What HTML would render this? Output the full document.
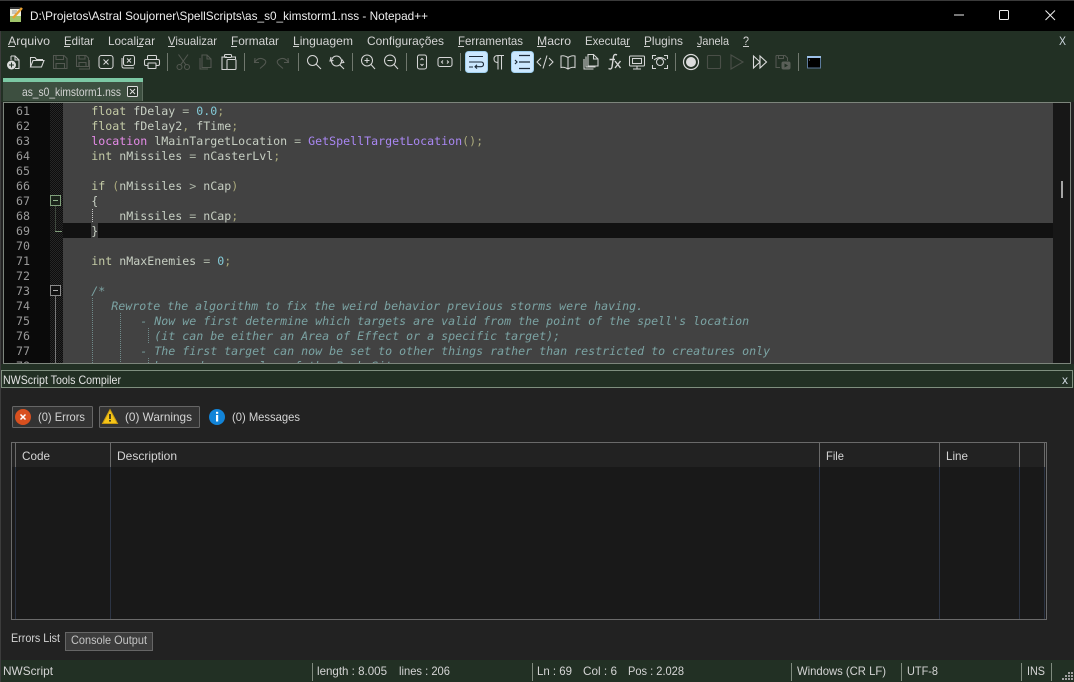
<!DOCTYPE html>
<html><head><meta charset="utf-8"><title>Notepad++</title>
<style>
html,body{margin:0;padding:0;background:#222;overflow:hidden}
svg{display:block}
text{font-family:"Liberation Sans",sans-serif;font-size:12px;fill:#d4d4d4;white-space:pre}
.c{font-family:"DejaVu Sans Mono",monospace;font-size:11.63px;fill:#c6cec2}
.k{fill:#c4cba6}.p{fill:#aaa97c}.o{fill:#aab2a4}.n{fill:#84cbd8}.t{fill:#e58be8}.f{fill:#a987f2}
.m{font-family:"DejaVu Sans Mono",monospace;font-size:11.63px;fill:#7ba3a3;font-style:italic}
.ln{font-family:"DejaVu Sans Mono",monospace;font-size:11.63px;fill:#9a9a9a;text-anchor:end}
.i{fill:none;stroke:#d6d6d6;stroke-width:1.05}
.d{fill:none;stroke:#535851;stroke-width:1.05}
.b{fill:none;stroke:#1c2a38;stroke-width:1.1}
</style></head><body>
<svg width="1074" height="682" viewBox="0 0 1074 682" xmlns="http://www.w3.org/2000/svg">
<defs>
<clipPath id="ed"><rect x="4" y="103" width="1049" height="260"/></clipPath>
<pattern id="chk" width="2" height="2" patternUnits="userSpaceOnUse"><rect width="2" height="2" fill="#0d0d0d"/><rect width="1" height="1" fill="#262626"/><rect x="1" y="1" width="1" height="1" fill="#262626"/></pattern>
</defs>
<rect width="1074" height="682" fill="#222"/>
<!-- title bar -->
<rect width="1074" height="31" fill="#000"/>
<rect width="1074" height="1" fill="#3a3a3a"/>
<g>
<rect x="10" y="9" width="11" height="13" fill="#f0f0e4"/>
<rect x="10" y="16" width="11" height="6" fill="#9fc46a"/>
<path d="M10 8h11" stroke="#666"/>
<path d="M13 18L22 8" stroke="#e8a030" stroke-width="2.4"/>
<path d="M12 11h5M12 13h4" stroke="#999"/>
</g>
<text x="30" y="20" textLength="398" lengthAdjust="spacingAndGlyphs" style="fill:#eee">D:\Projetos\Astral Soujorner\SpellScripts\as_s0_kimstorm1.nss - Notepad++</text>
<path d="M954 15h10" stroke="#eee"/>
<rect x="999.5" y="10.5" width="9" height="9" rx="1" fill="none" stroke="#eee"/>
<path d="M1045.5 10.5l9.5 9.500M1055 10.500l-9.500 9.500" stroke="#eee"/>
<!-- menu + toolbar band -->
<rect y="31" width="1074" height="71" fill="#223024"/>
<g>
<text x="8" y="45" textLength="42" lengthAdjust="spacingAndGlyphs">Arquivo</text>
<text x="64" y="45" textLength="30" lengthAdjust="spacingAndGlyphs">Editar</text>
<text x="108" y="45" textLength="47" lengthAdjust="spacingAndGlyphs">Localizar</text>
<text x="168" y="45" textLength="49" lengthAdjust="spacingAndGlyphs">Visualizar</text>
<text x="231" y="45" textLength="48" lengthAdjust="spacingAndGlyphs">Formatar</text>
<text x="293" y="45" textLength="60" lengthAdjust="spacingAndGlyphs">Linguagem</text>
<text x="367" y="45" textLength="77" lengthAdjust="spacingAndGlyphs">Configurações</text>
<text x="458" y="45" textLength="65" lengthAdjust="spacingAndGlyphs">Ferramentas</text>
<text x="537" y="45" textLength="34" lengthAdjust="spacingAndGlyphs">Macro</text>
<text x="585" y="45" textLength="45" lengthAdjust="spacingAndGlyphs">Executar</text>
<text x="644" y="45" textLength="39" lengthAdjust="spacingAndGlyphs">Plugins</text>
<text x="697" y="45" textLength="32" lengthAdjust="spacingAndGlyphs">Janela</text>
<text x="743" y="45" textLength="6" lengthAdjust="spacingAndGlyphs">?</text>
<path d="M8 46.500h7M64 46.500h6M137 46.500h6M168 46.500h7M231 46.500h6M293 46.500h6M458 46.500h6M537 46.500h9M625 46.500h5M644 46.500h6M697 46.500h4M743 46.500h6" stroke="#cfcfcf"/>
</g>
<text x="1059" y="45" textLength="7" lengthAdjust="spacingAndGlyphs" style="fill:#cfd8e0">X</text>

<!-- toolbar separators -->
<path d="M167.500 53v18M244.500 53v18M298.500 53v18M352.500 53v18M406.500 53v18M460.500 53v18M675.500 53v18M798.500 53v18" stroke="#70786e"/>
<!-- new -->
<g class="i" transform="translate(14,62)"><path d="M-3-6h4l4 4v8.500h-4M-3-6v4M1-6v4h4"/><circle cx="-2.500" cy="3" r="4.500" fill="#dcdcdc" stroke="none"/><path d="M-5 3h5M-2.500 .5v5" stroke="#223024"/></g>
<!-- open -->
<g class="i" transform="translate(37,62)"><path d="M-6.500 5V-4.500h4.500l1.500 2h6v1.500M-6.500 5h11l2.500-6.500h-11z"/></g>
<!-- save -->
<g class="d" transform="translate(60,62)"><path d="M-6.500-6.500h10.500l3 3v10h-13.500z"/><path d="M-4-6.500v4h7.500v-4M-4 6.500v-5h8.500v5"/></g>
<!-- save all -->
<g class="d" transform="translate(83,62)"><path d="M-6.500-6.500h9.500l2.500 2.500v8.500h-12z"/><path d="M-4-6.500v3.500h6v-3.500M-4 4.500v-4h7v4M-4 7h10.500v-9"/></g>
<!-- close -->
<g class="i" transform="translate(106,62)"><rect x="-7" y="-6.500" width="14" height="13" rx="2.500"/><path d="M-2.500-2.500l5 5M2.500-2.500l-5 5"/></g>
<!-- close all -->
<g class="i" transform="translate(129,62)"><rect x="-5.500" y="-6.500" width="11" height="10" rx="2"/><path d="M-2-3.500l4 4M2-3.500l-4 4M-7-4v8q0 2 2 2h10"/></g>
<!-- print -->
<g class="i" transform="translate(152,62)"><path d="M-4.500-2.500v-3q0-1 1-1h7q1 0 1 1v3"/><path d="M-4 3.500h-2q-1.500 0-1.500-1.500v-3q0-1.500 1.500-1.500h12q1.500 0 1.500 1.500v3q0 1.500-1.500 1.500h-2"/><rect x="-4" y="1" width="8" height="5.500" rx=".5"/></g>
<!-- cut -->
<g class="d" transform="translate(183,62)"><circle cx="-3.500" cy="5" r="2.500"/><circle cx="4" cy="5" r="2.500"/><path d="M-2.500 3L5-7.500M3 3L-4.500-7.500"/></g>
<!-- copy -->
<g class="d" transform="translate(206,62)"><path d="M-4-7h5l4 4v8.500h-9z"/><path d="M1-7v4h4M-6-4v11h8"/></g>
<!-- paste -->
<g class="i" transform="translate(229,62)"><path d="M-2-5h-5v12.500h5"/><rect x="-2" y="-2.500" width="9" height="10" rx="1"/><rect x="-4.500" y="-7.500" width="7" height="3" rx="1"/><path d="M2.500-5h4v2"/></g>
<!-- undo / redo -->
<g class="d" transform="translate(260,62)"><path d="M-5-4l-.5 4.500h4.500M-5.500 .5Q-2-5 3-3t1 6L0 6.500"/></g>
<g class="d" transform="translate(283,62)"><path d="M5-4l.5 4.500H1M5.500 .5Q2-5-3-3t-1 6L0 6.500"/></g>
<!-- find -->
<g class="i" transform="translate(314,62)"><circle cx="-1.500" cy="-1.500" r="5"/><path d="M2 2l5 5"/></g>
<!-- replace -->
<g class="i" transform="translate(337,62)"><circle cx="-.5" cy="-1" r="5"/><path d="M-6-5l-1 4 3.500-.5M5-2.500l1.800 3-3.500.5M3 3l4 4" /></g>
<!-- zoom in -->
<g class="i" transform="translate(368,62)"><circle cx="-1" cy="-1.500" r="5.500"/><path d="M-3.500-1.500h5M-1-4v5M3 2.500l4 4.500"/></g>
<!-- zoom out -->
<g class="i" transform="translate(391,62)"><circle cx="-1" cy="-1.500" r="5.500"/><path d="M-3.500-1.500h5M3 2.500l4 4.500"/></g>
<!-- sync v -->
<g class="i" transform="translate(422,62)"><rect x="-4.500" y="-7" width="9" height="14" rx="2"/><path d="M-1.500-2L0-3.500 1.500-2M-1.500 2L0 3.500 1.500 2"/></g>
<!-- sync h -->
<g class="i" transform="translate(445,62)"><rect x="-7" y="-4.500" width="14" height="9" rx="2"/><path d="M-2-1.500L-3.500 0-2 1.500M2-1.500L3.500 0 2 1.500"/></g>
<!-- wrap -->
<rect x="465.500" y="51.500" width="22" height="21" rx="3" fill="#cce8ff" stroke="#a0cfee"/>
<g class="b" transform="translate(476,62)"><path d="M-7-5.500h14M-7 0h12q2.500 0 2.500 2.300T5 4.700H-1M1 2.800l-2 1.900 2 1.900M-7 5h4"/></g>
<!-- pilcrow -->
<g class="i" transform="translate(499,62)"><path d="M-1-6.500v14M2.500-6.500v14M5-6.500H-1q-4 0-4 3.500t4 3.500"/></g>
<!-- indent -->
<rect x="511.500" y="51.500" width="22" height="21" rx="3" fill="#cce8ff" stroke="#a0cfee"/>
<g class="b" transform="translate(522,62)"><path d="M-3-6.500H8M-3 0H8M-3 6.500H8M-7-2l2 2-2 2" stroke-width="1.200"/></g>
<!-- code -->
<g class="i" transform="translate(545,62)"><path d="M-4-4l-4 4 4 4M4-4l4 4-4 4M2-6.500L-2 6.500"/></g>
<!-- map -->
<g class="i" transform="translate(568,62)"><path d="M0-4.500Q-4-7-7-6v11.500Q-4 4.500 0 7q4-2.500 7-1.500V-6q-3-1-7 1.500zM0-4.500V7"/></g>
<!-- doc list -->
<g class="i" transform="translate(591,62)"><path d="M-3-7.500h5.500L7-3v7h-10zM2.500-7.500V-3H7"/><path d="M-5-5.500v10.500h9.500M-7-3v10h9.500"/></g>
<!-- fx -->
<g class="i" transform="translate(614,62)"><path d="M3-7q-3-1.500-3.500 1.500L-2 5q-.5 3-3.500 1.500M-4.500-2.500H1M1-1l5.500 7M6.500-1L1 6" stroke-width="1.400"/></g>
<!-- monitor -->
<g class="i" transform="translate(637,62)"><rect x="-7.500" y="-6" width="15" height="10" rx="1"/><rect x="-4.500" y="-3.500" width="9" height="5"/><path d="M0 4v3M-4 7h8"/></g>
<!-- camera -->
<g class="i" transform="translate(660,62)"><path d="M-7.500-3v-3.500h3.500M4-6.500h3.500V-3M-7.500 3v3.500h3.500M4 6.500h3.500V3"/><circle cx="0" cy="0" r="3.500"/><path d="M-6-2Q0-7 6-2"/></g>
<!-- record -->
<circle cx="691" cy="62" r="7.500" fill="none" stroke="#dcdcdc" stroke-width="1.200"/><circle cx="691" cy="62" r="5" fill="#dcdcdc"/>
<!-- stop -->
<rect x="707.500" y="55.500" width="13" height="13" rx="1" fill="none" stroke="#4a4f48" stroke-width="1.100"/>
<!-- play -->
<path d="M731 55l12 7-12 7z" fill="none" stroke="#4a4f48" stroke-width="1.100"/>
<!-- ff -->
<path d="M753.500 56l6.500 6-6.500 6zM760 56l6.500 6-6.500 6z" fill="none" stroke="#dcdcdc" stroke-width="1.100"/>
<!-- save macro -->
<g class="d" transform="translate(783,62)"><path d="M-7-6.500h9l2.500 2.500v3M-7-6.500v12h4"/><path d="M-4.500-6.500v3h5v-3"/><rect x="-1.500" y="-.5" width="9" height="8" rx="2" fill="#5a5f58" stroke="none"/><path d="M1.500 1.500l3.500 2-3.500 2z" fill="#223024" stroke="none"/></g>
<!-- console -->
<rect x="807.500" y="56.500" width="13" height="11.500" fill="#000" stroke="#5c7a9c"/>
<rect x="807" y="56" width="14" height="2" fill="#9cc0e8"/>
<path d="M809 60h1" stroke="#999"/>

<!-- tab -->
<rect x="3" y="78" width="140" height="23" fill="#3d4f40"/>
<rect x="3" y="78" width="140" height="4" fill="#7cc8a4"/>
<path d="M142.500 82v19" stroke="#5d6d5f"/>
<text x="22" y="96" textLength="99" lengthAdjust="spacingAndGlyphs" style="fill:#d4d4d4">as_s0_kimstorm1.nss</text>
<rect x="127.500" y="86.500" width="10" height="10" rx="1" fill="#2a362c" stroke="#ddd"/>
<path d="M130 89l5 5M135 89l-5 5" stroke="#ddd"/>

<!-- editor -->
<rect x="3" y="102" width="1068" height="262" fill="#7d857c"/>
<rect x="4" y="103" width="1066" height="260" fill="#171717"/>
<rect x="4" y="103" width="46" height="260" fill="#0a0a0a"/>
<rect x="50" y="103" width="13" height="260" fill="url(#chk)"/>
<rect x="63" y="103" width="990" height="260" fill="#424242"/>
<rect x="63" y="223" width="990" height="15" fill="#111"/>
<rect x="91" y="223" width="7" height="15" fill="#3a3a3a"/>
<rect x="1061" y="181" width="2" height="17" fill="#a4a4a4"/>
<g clip-path="url(#ed)">
<text class="ln" x="30" y="115">61</text><text class="ln" x="30" y="130">62</text><text class="ln" x="30" y="145">63</text><text class="ln" x="30" y="160">64</text><text class="ln" x="30" y="175">65</text><text class="ln" x="30" y="190">66</text><text class="ln" x="30" y="205">67</text><text class="ln" x="30" y="220">68</text><text class="ln" x="30" y="235">69</text><text class="ln" x="30" y="250">70</text><text class="ln" x="30" y="265">71</text><text class="ln" x="30" y="280">72</text><text class="ln" x="30" y="295">73</text><text class="ln" x="30" y="310">74</text><text class="ln" x="30" y="325">75</text><text class="ln" x="30" y="340">76</text><text class="ln" x="30" y="355">77</text><text class="ln" x="30" y="370">78</text>
<!-- fold -->
<path d="M55.500 206v25" fill="none" stroke="#3d463c"/>
<path d="M55 231.500h7" stroke="#7f9a7a"/>
<rect x="50.500" y="195.500" width="10" height="10" fill="#1a221a" stroke="#7f9f7a"/>
<path d="M53 200.500h5" stroke="#8fb08a"/>
<path d="M55.500 296v67" stroke="#777"/>
<rect x="50.500" y="285.500" width="10" height="10" fill="#111" stroke="#8a8a8a"/>
<path d="M53 290.500h5" stroke="#aaa"/>
<!-- indent guides -->
<path d="M92.500 209v14" stroke="#c8c8c8" stroke-dasharray="1 1"/>
<path d="M92.500 298v65M120.500 313v50M148.500 328v15M148.500 358v5" stroke="#6f8a8a" stroke-dasharray="1 1"/>
<g transform="translate(-0.8,0)">
<text class="c" x="92" y="115"><tspan class="k">float</tspan> fDelay <tspan class="o">=</tspan> <tspan class="n">0.0</tspan><tspan class="p">;</tspan></text>
<text class="c" x="92" y="130"><tspan class="k">float</tspan> fDelay2<tspan class="p">,</tspan> fTime<tspan class="p">;</tspan></text>
<text class="c" x="92" y="145"><tspan class="t">location</tspan> lMainTargetLocation <tspan class="o">=</tspan> <tspan class="f">GetSpellTargetLocation</tspan><tspan class="p">();</tspan></text>
<text class="c" x="92" y="160"><tspan class="k">int</tspan> nMissiles <tspan class="o">=</tspan> nCasterLvl<tspan class="p">;</tspan></text>
<text class="c" x="92" y="190"><tspan class="k">if</tspan> <tspan class="p">(</tspan>nMissiles <tspan class="o">&gt;</tspan> nCap<tspan class="p">)</tspan></text>
<text class="c" x="92" y="205">{</text>
<text class="c" x="120" y="220">nMissiles <tspan class="o">=</tspan> nCap<tspan class="p">;</tspan></text>
<text class="c" x="92" y="235">}</text>
<text class="c" x="92" y="265"><tspan class="k">int</tspan> nMaxEnemies <tspan class="o">=</tspan> <tspan class="n">0</tspan><tspan class="p">;</tspan></text>
<text class="m" x="92" y="295">/*</text>
<text class="m" x="112" y="310">Rewrote the algorithm to fix the weird behavior previous storms were having.</text>
<text class="m" x="141" y="325">- Now we first determine which targets are valid from the point of the spell's location</text>
<text class="m" x="155" y="340">(it can be either an Area of Effect or a specific target);</text>
<text class="m" x="141" y="355">- The first target can now be set to other things rather than restricted to creatures only</text>
<text class="m" x="155" y="370">be used as a value of the Bomb Site</text>
</g>
</g>

<!-- splitter & panel title -->
<rect y="364" width="1074" height="24" fill="#223024"/>
<rect x="1.500" y="370.500" width="1071" height="17" fill="#223024" stroke="#7f8f7f"/>
<text x="3" y="384" textLength="118" lengthAdjust="spacingAndGlyphs" style="fill:#e4e4e4">NWScript Tools Compiler</text>
<text x="1062" y="384" textLength="6" lengthAdjust="spacingAndGlyphs" style="fill:#cfd8e0">x</text>

<!-- panel buttons -->
<rect x="12.500" y="406.500" width="80" height="21" rx="1" fill="#333" stroke="#666"/>
<rect x="99.500" y="406.500" width="100" height="21" rx="1" fill="#333" stroke="#666"/>
<circle cx="23" cy="417" r="8" fill="#d8501f"/>
<path d="M20.500 414.500l5 5M25.500 414.500l-5 5" stroke="#fff" stroke-width="1.500"/>
<path d="M110 409.500l7.500 14h-15z" fill="#f5c518" stroke="#c89a10"/>
<rect x="109.200" y="414" width="1.600" height="5" fill="#222"/><rect x="109.200" y="420" width="1.600" height="1.600" fill="#222"/>
<circle cx="217" cy="417" r="8" fill="#1284d8"/>
<rect x="216" y="415" width="2.200" height="6.500" fill="#fff"/><rect x="216" y="411.800" width="2.200" height="2" fill="#fff"/>
<text x="38" y="421" textLength="47" lengthAdjust="spacingAndGlyphs">(0) Errors</text>
<text x="125" y="421" textLength="67" lengthAdjust="spacingAndGlyphs">(0) Warnings</text>
<text x="232" y="421" textLength="68" lengthAdjust="spacingAndGlyphs">(0) Messages</text>

<!-- table -->
<rect x="11.500" y="442.500" width="1035" height="177" fill="#191919" stroke="#6a6a6a"/>
<rect x="12" y="443" width="1034" height="24" fill="#222"/>
<path d="M15.500 443v24M110.500 443v24M819.500 443v24M939.500 443v24M1019.500 443v24M1044.500 443v24" stroke="#6a6a6a"/>
<path d="M15.500 467v152M110.500 467v152M819.500 467v152M939.500 467v152M1019.500 467v152M1044.500 467v152" stroke="#2c3444"/>
<text x="22" y="460" textLength="28" lengthAdjust="spacingAndGlyphs">Code</text>
<text x="117" y="460" textLength="60" lengthAdjust="spacingAndGlyphs">Description</text>
<text x="826" y="460" textLength="18" lengthAdjust="spacingAndGlyphs">File</text>
<text x="946" y="460" textLength="22" lengthAdjust="spacingAndGlyphs">Line</text>

<!-- bottom tabs -->
<text x="11" y="642" textLength="49" lengthAdjust="spacingAndGlyphs" style="font-size:11.500px">Errors List</text>
<rect x="65.500" y="632.500" width="87" height="18" fill="#3c3c3c" stroke="#666"/>
<text x="71" y="644" textLength="76" lengthAdjust="spacingAndGlyphs" style="fill:#c4c4c4">Console Output</text>

<!-- status bar -->
<rect y="660" width="1074" height="22" fill="#223024"/>
<path d="M312.500 663v18M532.500 663v18M791.500 663v18M901.500 663v18M1021.500 663v18M1051.500 663v18" stroke="#7f8a7e"/>
<text x="3" y="675" textLength="50" lengthAdjust="spacingAndGlyphs">NWScript</text>
<text x="317" y="675" textLength="70" lengthAdjust="spacingAndGlyphs">length : 8.005</text>
<text x="399" y="675" textLength="51" lengthAdjust="spacingAndGlyphs">lines : 206</text>
<text x="537" y="675" textLength="35" lengthAdjust="spacingAndGlyphs">Ln : 69</text>
<text x="583" y="675" textLength="34" lengthAdjust="spacingAndGlyphs">Col : 6</text>
<text x="628" y="675" textLength="56" lengthAdjust="spacingAndGlyphs">Pos : 2.028</text>
<text x="797" y="675" textLength="89" lengthAdjust="spacingAndGlyphs">Windows (CR LF)</text>
<text x="907" y="675" textLength="31" lengthAdjust="spacingAndGlyphs">UTF-8</text>
<text x="1027" y="675" textLength="18" lengthAdjust="spacingAndGlyphs">INS</text>
<path d="M1068 672h2v2h-2zM1071 672h2v2h-2zM1065 675h2v2h-2zM1068 675h2v2h-2zM1071 675h2v2h-2zM1062 678h2v2h-2zM1065 678h2v2h-2zM1068 678h2v2h-2zM1071 678h2v2h-2z" fill="#a0a0a0"/>
<path d="M.500 31V682" stroke="#3c3c3c"/>
</svg>
</body></html>
